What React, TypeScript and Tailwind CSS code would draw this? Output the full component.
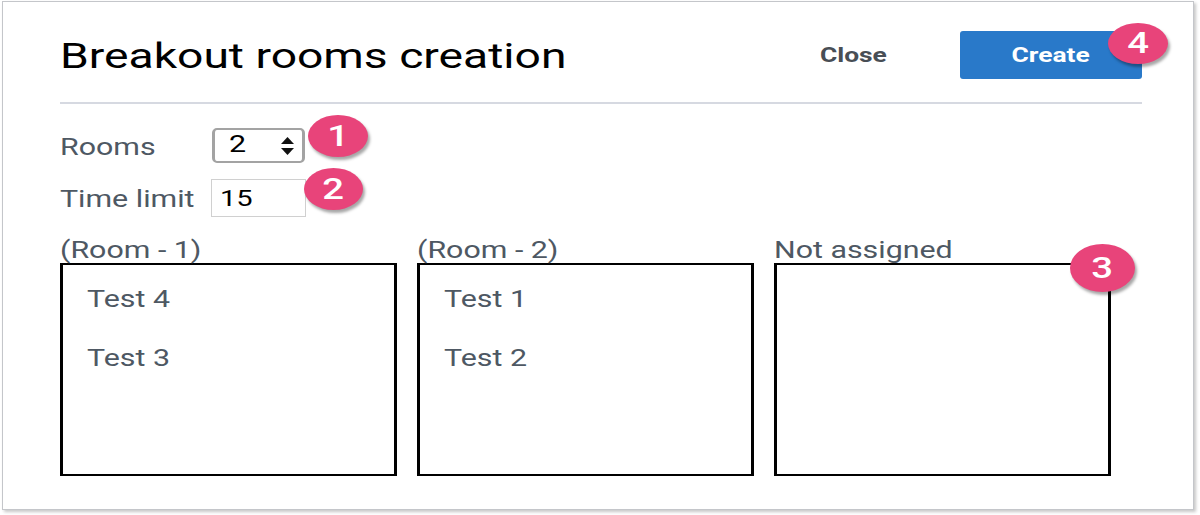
import React from "react";

const font = { fontFamily: 'Roboto, "Noto Sans", sans-serif' };

// the reference is a horizontally stretched capture, so text is widened to match
function Wide({ children, center }: { children: React.ReactNode; center?: boolean }) {
	return (
		<span
			className={
				center
					? "inline-block origin-center scale-x-[1.32]"
					: "inline-block origin-left scale-x-[1.32]"
			}
		>
			{children}
		</span>
	);
}

function Badge({ n, className }: { n: string; className: string }) {
	return (
		<span
			className={`absolute flex items-center justify-center rounded-[50%] bg-[#e8447a] text-[29px] font-medium leading-none text-white shadow-[2px_3px_3px_rgba(0,0,0,0.35)] ${className}`}
		>
			<Wide center>{n}</Wide>
		</span>
	);
}

function RoomBox({ label, items }: { label: string; items: string[] }) {
	return (
		<div className="flex w-[337px] flex-col">
			<div className="h-[28px] text-[23px] leading-[31px] text-[#4e5863]">
				<Wide>{label}</Wide>
			</div>
			<div className="flex h-[213px] flex-col gap-[29px] border-x-[3px] border-y-2 border-black pl-[24px] pt-[20px]">
				{items.map((item) => (
					<div key={item} className="text-[23px] leading-[30px] text-[#4e5863]">
						<Wide>{item}</Wide>
					</div>
				))}
			</div>
		</div>
	);
}

export default function App() {
	return (
		<div className="h-[515px] w-[1200px] bg-white pl-[2px] pt-px" style={font}>
			<div className="relative h-[509px] w-[1192px] border border-[#c4c6ca] bg-white pl-[57px] pr-[51px] shadow-[2px_2px_3px_rgba(0,0,0,0.22)]">
				<div className="flex items-center justify-between pb-[23px] pt-[29px]">
					<h1 className="h-[48px] text-[35px] leading-[51px] text-black">
						<Wide>Breakout rooms creation</Wide>
					</h1>
					<div className="flex items-center">
						<button
							type="button"
							className="mr-[74px] w-[66px] text-[20px] font-bold text-[#484e55]"
						>
							<Wide center>Close</Wide>
						</button>
						<button
							type="button"
							className="h-[48px] w-[182px] rounded-[3px] bg-[#2979c9] text-[20px] font-bold text-white"
						>
							<Wide center>Create</Wide>
						</button>
					</div>
				</div>
				<div className="h-[2px] bg-[#d6d9e1]" />

				<div className="mt-[24px] flex items-center">
					<div className="h-[35px] w-[152px] text-[23px] leading-[39px] text-[#4e5863]">
						<Wide>Rooms</Wide>
					</div>
					<div className="flex h-[35px] w-[93px] items-center justify-between rounded-[5px] border-x-[3px] border-y-2 border-[#a3a3a3] pl-[14px] pr-[6px]">
						<span className="text-[23px] text-black">
							<Wide>2</Wide>
						</span>
						<svg width="17" height="22" viewBox="0 0 17 22">
							<path d="M8.5 2 L15 9 H2 Z" fill="#111" />
							<path d="M8.5 20 L15 13 H2 Z" fill="#111" />
						</svg>
					</div>
				</div>

				<div className="mt-[16px] flex items-center">
					<div className="h-[38px] w-[151px] text-[23px] leading-[42px] text-[#4e5863]">
						<Wide>Time limit</Wide>
					</div>
					<div className="flex h-[38px] w-[95px] items-center border border-[#d0d0d0] pl-[8px] text-[22px] leading-[41px] text-black">
						<Wide>15</Wide>
					</div>
				</div>

				<div className="mt-[18px] flex gap-[20px]">
					<RoomBox label="(Room - 1)" items={["Test 4", "Test 3"]} />
					<RoomBox label="(Room - 2)" items={["Test 1", "Test 2"]} />
					<RoomBox label="Not assigned" items={[]} />
				</div>

				<Badge n="1" className="left-[305px] top-[113px] h-[42px] w-[60px]" />
				<Badge n="2" className="left-[301px] top-[166px] h-[42px] w-[59px]" />
				<Badge n="3" className="left-[1067px] top-[242px] h-[48px] w-[65px]" />
				<Badge n="4" className="left-[1105px] top-[21px] h-[41px] w-[60px]" />
			</div>
		</div>
	);
}
